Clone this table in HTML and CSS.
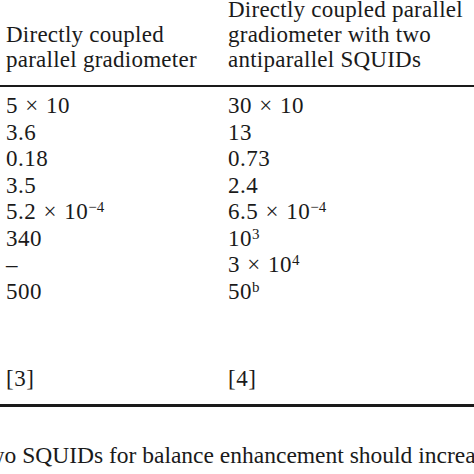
FILE: index.html
```html
<!DOCTYPE html>
<html>
<head>
<meta charset="utf-8">
<link rel="stylesheet" href="styles.css">
</head>
<body>
<div class="page">
  <div class="table">
    <div class="head">
      <div class="cell">Directly coupled<br>parallel gradiometer</div>
      <div class="cell">Directly coupled parallel<br>gradiometer with two<br>antiparallel SQUIDs</div>
    </div>
    <div class="rows">
      <div class="row"><span>5 × 10</span><span>30 × 10</span></div>
      <div class="row"><span>3.6</span><span>13</span></div>
      <div class="row"><span>0.18</span><span>0.73</span></div>
      <div class="row"><span>3.5</span><span>2.4</span></div>
      <div class="row"><span>5.2 × 10<span class="sup">−4</span></span><span>6.5 × 10<span class="sup">−4</span></span></div>
      <div class="row"><span>340</span><span>10<span class="sup">3</span></span></div>
      <div class="row"><span>–</span><span>3 × 10<span class="sup">4</span></span></div>
      <div class="row"><span>500</span><span>50<span class="sup">b</span></span></div>
    </div>
    <div class="refs">
      <div class="row"><span>[3]</span><span>[4]</span></div>
    </div>
  </div>
  <p class="note">two SQUIDs for balance enhancement should increase the</p>
</div>
</body>
</html>
```
FILE: styles.css
```css
html, body {
  margin: 0;
  padding: 0;
  background: #ffffff;
}
body {
  width: 474px;
  height: 474px;
  overflow: hidden;
  font-family: "Liberation Serif", "Times New Roman", serif;
  color: #1a1a1a;
}
.page {
  width: 474px;
  overflow: hidden;
}
.table {
  display: flex;
  flex-direction: column;
}
.head {
  display: grid;
  grid-template-columns: 222px 1fr;
  align-items: end;
  margin-top: -3px;
  padding: 0 0 13px 6px;
  border-bottom: 2px solid #1a1a1a;
  font-size: 23px;
  line-height: 25px;
  letter-spacing: 0.25px;
  white-space: nowrap;
}
.rows {
  padding: 6px 0 0 6px;
}
.row {
  display: grid;
  grid-template-columns: 222px 1fr;
  font-size: 23px;
  line-height: 26.5px;
  height: 26.5px;
  letter-spacing: 0.5px;
  word-spacing: 1px;
  white-space: nowrap;
}
.sup {
  font-size: 15px;
  line-height: 0;
  vertical-align: 7px;
  letter-spacing: 0;
}
.refs {
  margin-top: 61px;
  padding: 0 0 11px 6px;
  border-bottom: 3px solid #1a1a1a;
}
.note {
  margin: 34px 0 0 -19px;
  font-size: 23.5px;
  line-height: 28px;
  white-space: nowrap;
}
```
